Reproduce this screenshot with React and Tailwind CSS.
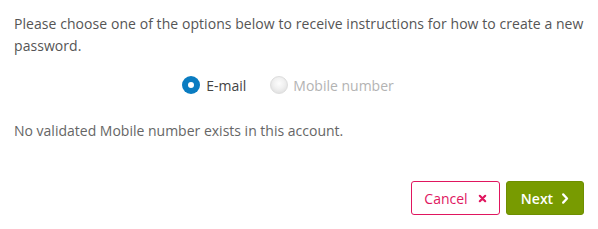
export default function App() {
  return (
    <div className="w-[598px] h-[229px] bg-white text-[14px] text-[#555]" style={{ fontFamily: '"Open Sans", sans-serif' }}>
      <div className="px-[14px] pt-[13px]">
        <p className="leading-[22px] tracking-[0.06px]">Please choose one of the options below to receive instructions for how to create a new password.</p>
        <div className="flex justify-center items-center mt-[17px] pr-[22px] h-[22px]">
          <label className="flex items-center gap-[6px]">
            <span className="w-[18px] h-[18px] rounded-full bg-[#0a7cc1] flex items-center justify-center">
              <span className="w-[6px] h-[6px] rounded-full bg-white" />
            </span>
            <span className="text-[#444]">E-mail</span>
          </label>
          <label className="flex items-center gap-[5px] ml-[24px]">
            <span className="w-[18px] h-[18px] rounded-full border border-[#ddd] bg-[radial-gradient(circle_at_50%_40%,#fdfdfd_0%,#f0f0f0_45%,#d8d8d8_100%)]" />
            <span className="text-[#b3b3b3]">Mobile number</span>
          </label>
        </div>
        <p className="mt-[24px] leading-[22px] text-[#666]">No validated Mobile number exists in this account.</p>
        <div className="flex justify-end gap-[6px] mt-[39px]">
          <button className="h-[34px] w-[89px] rounded-[3px] border border-[#e0165f] text-[#e0165f] flex items-center justify-center gap-[10px] text-[14px]">
            <span>Cancel</span>
            <svg width="9" height="9" viewBox="0 0 10 10"><path d="M2 2L8 8M8 2L2 8" stroke="#e0165f" strokeWidth="2.4" strokeLinecap="round" /></svg>
          </button>
          <button className="h-[34px] w-[78px] rounded-[3px] bg-[#789b01] border border-[#6e8f00] text-white font-semibold flex items-center justify-center gap-[8px] text-[14px]">
            <span>Next</span>
            <svg width="8" height="11" viewBox="0 0 8 12"><path d="M2 1.5L6.2 6L2 10.5" stroke="white" strokeWidth="2.4" fill="none" strokeLinecap="round" strokeLinejoin="round" /></svg>
          </button>
        </div>
      </div>
    </div>
  );
}
